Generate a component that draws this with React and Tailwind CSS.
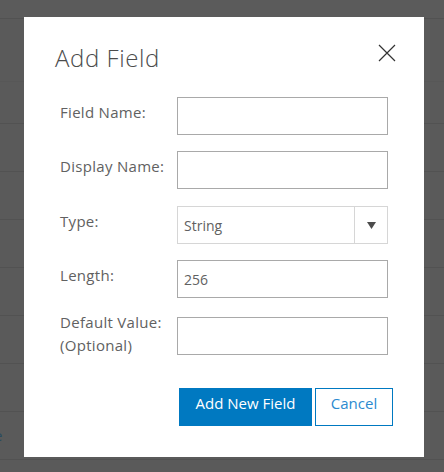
const font = { fontFamily: "'Open Sans', 'Noto Sans', sans-serif" };

function Row({ label, children, className = "" }) {
  return (
    <div className={`flex items-start ${className}`}>
      <div className="w-[117px] pt-[4px] text-[15px] leading-[22px] tracking-[0.3px] text-[#616161]">{label}</div>
      {children}
    </div>
  );
}

function TextBox({ value = "" }) {
  return (
    <div className="flex h-[38px] w-[211px] items-center border border-[#a9a9a9] bg-white pl-[6px] text-[14px] text-[#616161]">
      {value}
    </div>
  );
}

export default function App() {
  const rows = Array.from({ length: 8 });
  return (
    <div className="relative h-[472px] w-[444px] overflow-hidden bg-[#5a5a5a]" style={font}>
      {/* page under the overlay */}
      <div className="h-[19px] border-b border-[#525252] bg-[#5b5b5b]" />
      <div className="h-[105px] border-b border-[#525252]">
        <div className="h-[63px] border-b border-[#575757]" />
      </div>
      {rows.map((_, i) => (
        <div key={i} className="flex h-[48px] items-center border-b border-[#525252]">
          {i === 6 && <span className="-ml-[6px] text-[15px] text-[#2a4a5e]">e</span>}
        </div>
      ))}

      {/* modal */}
      <div className="absolute left-[24px] top-[17px] flex w-[400px] flex-col bg-white px-[31px] pb-[31px] pt-[25px]">
        <div className="flex items-start justify-between">
          <h2 className="text-[24px] font-light leading-[32px] tracking-[0.6px] text-[#4c4c4c]">Add Field</h2>
          <svg className="-mr-[3px] mt-[2px]" width="18" height="18" viewBox="0 0 18 18">
            <path d="M1 1 L17 17 M17 1 L1 17" stroke="#333" strokeWidth="1.2" fill="none" />
          </svg>
        </div>

        <div className="mt-[23px] flex flex-col px-[5px]">
          <Row label="Field Name:">
            <TextBox />
          </Row>
          <Row label="Display Name:" className="mt-[16px]">
            <TextBox />
          </Row>
          <Row label="Type:" className="mt-[17px]">
            <div className="flex h-[38px] w-[211px] border border-[#d6d6d6] bg-white">
              <div className="flex flex-1 items-center pl-[6px] text-[14px] text-[#616161]">String</div>
              <div className="flex w-[33px] items-center justify-center border-l border-[#d6d6d6]">
                <svg width="9" height="7" viewBox="0 0 9 7">
                  <polygon points="0,0 9,0 4.5,7" fill="#4c4c4c" />
                </svg>
              </div>
            </div>
          </Row>
          <Row label="Length:" className="mt-[16px]">
            <TextBox value="256" />
          </Row>
          <div className="mt-[19px] flex items-start">
            <div className="-mt-[6px] w-[117px] text-[15px] leading-[23px] tracking-[0.3px] text-[#616161]">
              Default Value:
              <br />
              (Optional)
            </div>
            <TextBox />
          </div>
        </div>

        <div className="mt-[31px] flex justify-end gap-[3px]">
          <button className="h-[38px] w-[133px] bg-[#0079c1] pb-[8px] text-[15px] text-white">Add New Field</button>
          <button className="h-[38px] w-[78px] border border-[#0079c1] bg-white pb-[8px] text-[15px] text-[#2b8ad0]">
            Cancel
          </button>
        </div>
      </div>
    </div>
  );
}
